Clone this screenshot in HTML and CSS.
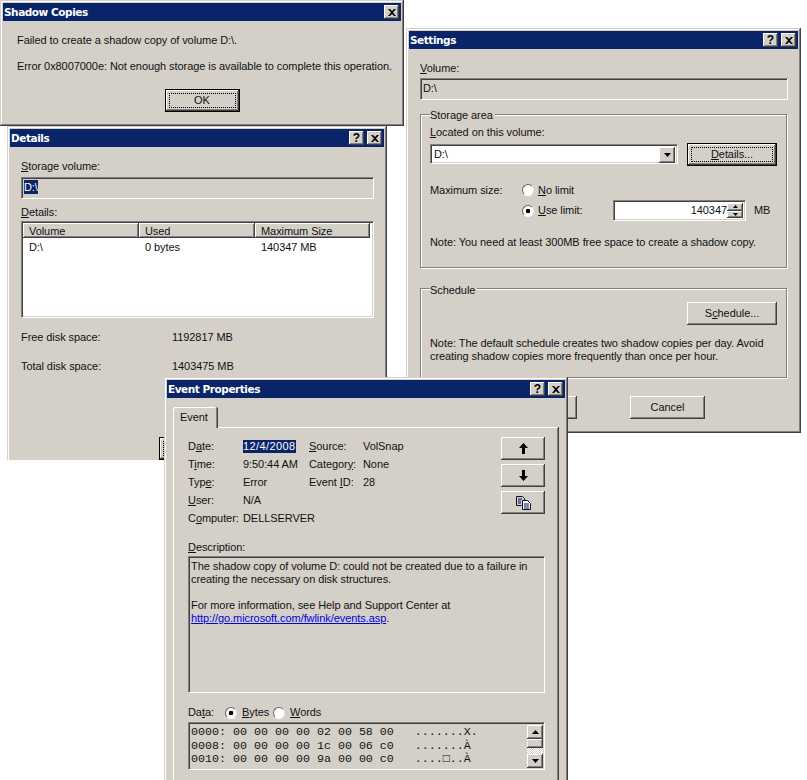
FILE: index.html
```html
<!DOCTYPE html>
<html lang="en">
<head>
<meta charset="utf-8">
<title>Shadow Copies</title>
<link rel="stylesheet" href="styles.css">
</head>
<body>
<main class="desktop">

  <section class="window win-shadow">
    <header class="titlebar">
      <span class="title">Shadow Copies</span>
      <span class="caption-btns">
        <span class="cap raised"><svg width="8" height="7" viewBox="0 0 8 7"><path d="M0 0h2l2 2 2-2h2L5 3.500 8 7H6L4 5 2 7H0l3-3.500z"/></svg></span>
      </span>
    </header>
    <div class="body-msg">
      <p class="msg-first">Failed to create a shadow copy of volume D:\.</p>
      <p class="msg-second">Error 0x8007000e: Not enough storage is available to complete this operation.</p>
      <button class="btn btn-default btn-center"><span class="focus">OK</span></button>
    </div>
  </section>

  <section class="window win-details">
    <header class="titlebar">
      <span class="title">Details</span>
      <span class="caption-btns">
        <span class="cap raised">?</span>
        <span class="cap raised"><svg width="8" height="7" viewBox="0 0 8 7"><path d="M0 0h2l2 2 2-2h2L5 3.500 8 7H6L4 5 2 7H0l3-3.500z"/></svg></span>
      </span>
    </header>
    <div class="body-details">
      <div class="label d-label-1"><u>S</u>torage volume:</div>
      <div class="field sunken d-field"><span class="sel">D:\</span></div>
      <div class="label d-label-2"><u>D</u>etails:</div>
      <div class="list sunken">
        <div class="list-head">
          <span class="raised">Volume</span>
          <span class="raised">Used</span>
          <span class="raised">Maximum Size</span>
        </div>
        <div class="list-row">
          <span>D:\</span>
          <span>0 bytes</span>
          <span>140347 MB</span>
        </div>
      </div>
      <div class="disk-info">
        <span>Free disk space:</span><span>1192817 MB</span>
        <span>Total disk space:</span><span>1403475 MB</span>
      </div>
      <button class="btn btn-default d-ok"><span class="focus">OK</span></button>
    </div>
  </section>

  <section class="window win-settings">
    <header class="titlebar">
      <span class="title">Settings</span>
      <span class="caption-btns">
        <span class="cap raised">?</span>
        <span class="cap raised"><svg width="8" height="7" viewBox="0 0 8 7"><path d="M0 0h2l2 2 2-2h2L5 3.500 8 7H6L4 5 2 7H0l3-3.500z"/></svg></span>
      </span>
    </header>
    <div class="body-settings">
      <div class="label s-label"><u>V</u>olume:</div>
      <div class="field sunken s-field">D:\</div>

      <div class="group group-storage">
        <div class="legend">Storage area</div>
        <div class="label s-located"><u>L</u>ocated on this volume:</div>
        <div class="combo-row">
          <div class="combo sunken">
            <span class="combo-text">D:\</span>
            <span class="combo-arrow raised"><svg width="7" height="4" viewBox="0 0 7 4"><path d="M0 0h7L3.500 4z"/></svg></span>
          </div>
          <button class="btn btn-default btn-wide"><span class="focus"><u>D</u>etails...</span></button>
        </div>
        <div class="size-grid">
          <span>Maximum size:</span>
          <label class="radio-line"><span class="radio"></span><span><u>N</u>o limit</span></label>
          <span></span><span></span>
          <span></span>
          <label class="radio-line"><span class="radio checked"></span><span><u>U</u>se limit:</span></label>
          <div class="spin sunken">
            <span class="spin-value">140347</span>
            <span class="spin-btns">
              <span class="spin-btn raised"><svg width="5" height="3" viewBox="0 0 5 3"><path d="M2.500 0L5 3H0z"/></svg></span>
              <span class="spin-btn raised"><svg width="5" height="3" viewBox="0 0 5 3"><path d="M0 0h5L2.500 3z"/></svg></span>
            </span>
          </div>
          <span class="unit">MB</span>
        </div>
        <p class="note-storage">Note: You need at least 300MB free space to create a shadow copy.</p>
      </div>

      <div class="group group-schedule">
        <div class="legend">Schedule</div>
        <div class="schedule-action">
          <button class="btn btn-wide">S<u>c</u>hedule...</button>
        </div>
        <p class="note-schedule">Note: The default schedule creates two shadow copies per day. Avoid creating shadow copies more frequently than once per hour.</p>
      </div>

      <div class="s-footer">
        <button class="btn">OK</button>
        <button class="btn">Cancel</button>
      </div>
    </div>
  </section>

  <section class="window win-event">
    <header class="titlebar">
      <span class="title">Event Properties</span>
      <span class="caption-btns">
        <span class="cap raised">?</span>
        <span class="cap raised"><svg width="8" height="7" viewBox="0 0 8 7"><path d="M0 0h2l2 2 2-2h2L5 3.500 8 7H6L4 5 2 7H0l3-3.500z"/></svg></span>
      </span>
    </header>
    <div class="body-event">
      <div class="tab">Event</div>
      <div class="tab-panel">
        <div class="event-top">
          <div class="event-grid">
            <span>D<u>a</u>te:</span><span><span class="sel">12/4/2008</span></span><span><u>S</u>ource:</span><span>VolSnap</span>
            <span>T<u>i</u>me:</span><span>9:50:44 AM</span><span>Categor<u>y</u>:</span><span>None</span>
            <span>Typ<u>e</u>:</span><span>Error</span><span>Event <u>I</u>D:</span><span>28</span>
            <span><u>U</u>ser:</span><span class="wide">N/A</span>
            <span>C<u>o</u>mputer:</span><span class="wide">DELLSERVER</span>
          </div>
          <div class="nav-btns">
            <button class="btn nav-btn"><svg width="9" height="11" viewBox="0 0 9 11"><path d="M4.500 0L9 5H6v6H3V5H0z"/></svg></button>
            <button class="btn nav-btn"><svg width="9" height="11" viewBox="0 0 9 11"><path d="M3 0h3v6h3l-4.500 5L0 6h3z"/></svg></button>
            <button class="btn nav-btn"><svg width="15" height="14" viewBox="0 0 15 14"><path d="M.5.500h6l2 2v2M.5.500v9h5M2 3h4M2 5h3M2 7h3" fill="none" stroke="#0b0b3c"/><path d="M6.500 4.500h5l3 3v6h-8z" fill="#fff" stroke="#0b0b3c"/><path d="M8 8h5M8 10h5M8 12h5" fill="none" stroke="#0b0b3c"/></svg></button>
          </div>
        </div>
        <div class="label e-desc-label"><u>D</u>escription:</div>
        <div class="desc sunken">
          <p>The shadow copy of volume D: could not be created due to a failure in creating the necessary on disk structures.</p>
          <p class="desc-more">For more information, see Help and Support Center at <a href="#">http://go.microsoft.com/fwlink/events.asp</a>.</p>
        </div>
        <div class="data-row">
          <span class="data-label">Da<u>t</u>a:</span>
          <label class="radio-line"><span class="radio checked"></span><span><u>B</u>ytes</span></label>
          <label class="radio-line"><span class="radio"></span><span><u>W</u>ords</span></label>
        </div>
        <div class="hex sunken">
          <pre class="hex-text">0000: 00 00 00 00 02 00 58 00   .......X.
0008: 00 00 00 00 1c 00 06 c0   .......À
0010: 00 00 00 00 9a 00 00 c0   ....□..À</pre>
          <div class="scroll">
            <span class="scroll-btn raised"><svg width="7" height="4" viewBox="0 0 7 4"><path d="M3.500 0L7 4H0z"/></svg></span>
            <span class="scroll-thumb raised"></span>
            <span class="scroll-track"></span>
            <span class="scroll-btn raised"><svg width="7" height="4" viewBox="0 0 7 4"><path d="M0 0h7L3.500 4z"/></svg></span>
          </div>
        </div>
      </div>
    </div>
  </section>

</main>
</body>
</html>
```
FILE: styles.css
```css
* { box-sizing: border-box; }
html, body { margin: 0; padding: 0; background: #fff; }
.desktop {
  position: relative;
  width: 807px;
  height: 780px;
  overflow: hidden;
  font-family: "Liberation Sans", Arial, sans-serif;
  font-size: 11px;
  line-height: 13px;
  letter-spacing: -0.070px;
  color: #111;
}
p { margin: 0; }
u { text-underline-offset: 1px; }

.raised {
  background: #d4d0c8;
  box-shadow: inset -1px -1px #404040, inset 1px 1px #fff, inset -2px -2px #808080;
}
.sunken {
  border: 1px solid;
  border-color: #808080 #fff #fff #808080;
  box-shadow: inset 1px 1px #404040, inset -1px -1px #d4d0c8;
}

.window {
  position: absolute;
  background: #d4d0c8;
  padding: 3px;
  overflow: hidden;
  box-shadow: inset -1px -1px #404040, inset 1px 1px #d4d0c8, inset -2px -2px #808080, inset 2px 2px #fff;
}
.win-shadow { left: 0; top: 0; width: 404px; height: 126px; }
.win-details { left: 7px; top: 126px; width: 380px; height: 334px; box-shadow: inset -1px 0 #404040, inset 1px 1px #d4d0c8, inset -2px 0 #808080, inset 2px 2px #fff; }
.win-settings { left: 406px; top: 28px; width: 395px; height: 405px; }
.win-event { left: 164px; top: 377px; width: 404px; height: 430px; }

.titlebar {
  display: flex;
  align-items: center;
  justify-content: space-between;
  height: 18px;
  padding: 0 2px 0 1px;
  background: #0a246a;
  color: #fff;
}
.title {
  font-family: "DejaVu Sans", Verdana, sans-serif;
  font-size: 10.500px;
  font-weight: 700;
  letter-spacing: -0.450px;
  white-space: nowrap;
}
.caption-btns { display: flex; gap: 3px; }
.cap {
  display: flex;
  align-items: center;
  justify-content: center;
  width: 15px;
  height: 14px;
  font: 700 12px/14px "Liberation Sans", Arial, sans-serif;
  color: #000;
}

.btn {
  display: flex;
  align-items: center;
  justify-content: center;
  width: 75px;
  height: 23px;
  padding: 0;
  border: 0;
  background: #d4d0c8;
  color: #111;
  font: inherit;
  letter-spacing: inherit;
  box-shadow: inset -1px -1px #404040, inset 1px 1px #fff, inset -2px -2px #808080;
}
.btn-default {
  border: 1px solid #000;
  padding: 3px;
}
.focus {
  display: flex;
  align-items: center;
  justify-content: center;
  width: 100%;
  height: 100%;
  border: 1px dotted #000;
}
.btn-wide { width: 90px; flex: none; }
.btn-center { margin: 16px auto 0; }

.field {
  height: 22px;
  padding: 2px 1px 0 2px;
  line-height: 14px;
}
.sel { background: #0a246a; color: #fff; display: inline-block; }
.label { height: 13px; }

/* Shadow Copies message */
.body-msg { padding: 13px 14px 0 14px; }
.msg-second { margin-top: 13px; white-space: nowrap; }

/* Details */
.body-details { padding: 13px 10px 0 11px; }
.d-label-2 { margin-top: 7px; }
.d-field { margin-top: 4px; }
.list { margin-top: 2px; height: 97px; padding: 1px; background: #fff; }
.list-head, .list-row { display: grid; grid-template-columns: 116px 116px 115px; }
.list-head span { height: 15px; padding: 2px 0 0 6px; line-height: 13px; }
.list-row { margin-top: 3px; }
.list-row span { padding-left: 6px; }
.disk-info {
  display: grid;
  grid-template-columns: 151px 1fr;
  row-gap: 16px;
  margin-top: 13px;
}
.d-ok { margin: 64px 0 0 138px; }

/* Settings */
.body-settings { padding: 13px 10px 0 11px; }
.s-field { margin-top: 3px; }
.group {
  border: 1px solid #808080;
  box-shadow: 1px 1px #fff, inset 1px 1px #fff;
  padding: 0 9px;
  margin-right: 1px;
}
.legend {
  width: fit-content;
  height: 13px;
  margin-top: -6px;
  padding: 0 2px 0 0;
  background: #d4d0c8;
}
.group-storage { height: 154px; margin-top: 14px; }
.group-schedule { height: 90px; margin-top: 20px; }
.group-schedule .legend { margin-top: -5px; }
.group-schedule .schedule-action { margin-top: 5px; }
.s-located { margin-top: 4px; }
.combo-row { display: flex; justify-content: space-between; align-items: flex-start; margin-top: 4px; }
.combo {
  display: flex;
  justify-content: space-between;
  width: 248px;
  height: 20px;
  margin-top: 1px;
  padding: 2px;
  background: #fff;
}
.combo-text { line-height: 15px; padding-left: 1px; }
.combo-arrow { display: flex; align-items: center; justify-content: center; width: 16px; height: 16px; }
.size-grid {
  display: grid;
  grid-template-columns: 92px 91px 133px 1fr;
  grid-template-rows: 20px 21px;
  align-items: center;
  margin-top: 14px;
}
.radio-line { display: flex; align-items: center; gap: 4px; }
.radio {
  display: block;
  flex: none;
  width: 12px;
  height: 12px;
  border-radius: 50%;
  border: 1px solid;
  border-color: #666 #e8e8e8 #fff #666;
  background: #fff;
}
.radio.checked { background: radial-gradient(circle, #000 2px, #fff 2.600px); }
.spin {
  display: flex;
  justify-content: space-between;
  height: 21px;
  padding: 2px;
  background: #fff;
}
.spin-value { flex: 1; text-align: right; padding-right: 0; line-height: 14px; }
.spin-btns { display: flex; flex-direction: column; width: 16px; }
.spin-btn { display: flex; align-items: center; justify-content: center; height: 8.500px; }
.unit { padding-left: 8px; }
.note-storage { margin-top: 15px; white-space: nowrap; }
.schedule-action { display: flex; justify-content: flex-end; margin-top: 6px; }
.note-schedule { margin-top: 12px; width: 345px; }
.s-footer { display: flex; gap: 53px; margin: 18px 0 0 82px; }

/* Event properties */
.body-event { padding: 9px 6px 0 6px; }
.tab {
  width: 45px;
  height: 21px;
  margin-bottom: -1px;
  padding: 4px 0 0 7px;
  position: relative;
  background: #d4d0c8;
  border-radius: 2px 2px 0 0;
  box-shadow: inset -1px 0 #404040, inset 1px 1px #fff, inset -2px 0 #808080;
}
.tab-panel {
  width: 386px;
  height: 420px;
  padding: 10px 14px 0 15px;
  box-shadow: inset -1px 0 #404040, inset 1px 1px #fff, inset -2px 0 #808080;
}
.event-top { display: flex; justify-content: space-between; align-items: flex-start; }
.event-grid {
  display: grid;
  grid-template-columns: 55px 66px 54px 100px;
  grid-auto-rows: 18px;
  align-items: center;
}
.event-grid .sel { letter-spacing: 0.400px; }
.wide { grid-column: 2 / 5; }
.nav-btns { display: flex; flex-direction: column; gap: 4px; }
.nav-btn { width: 44px; height: 23px; }
.e-desc-label { margin-top: 14px; }
.desc {
  height: 137px;
  margin-top: 2px;
  padding: 3px 4px 0 2px;
}
.desc a { color: #0000e0; text-decoration: underline; }
.desc-more { margin-top: 13px; width: 300px; }
.data-row { display: flex; align-items: center; height: 13px; margin-top: 13px; }
.data-label { width: 37px; }
.data-row .radio-line { width: 48px; gap: 5px; }
.hex {
  display: flex;
  justify-content: space-between;
  height: 48px;
  margin-top: 3px;
  padding: 2px 1px 1px 2px;
}
.hex-text {
  margin: 1px 0 0;
  font-family: "Liberation Mono", "Courier New", monospace;
  font-size: 11.670px;
  line-height: 13.500px;
  letter-spacing: 0;
}
.scroll { display: flex; flex-direction: column; width: 16px; }
.scroll-btn { display: flex; align-items: center; justify-content: center; height: 14px; flex: none; }
.scroll-thumb { height: 9px; flex: none; }
.scroll-track { flex: 1; background: repeating-conic-gradient(#fff 0 25%, #d4d0c8 0 50%) 0 0 / 2px 2px; }
```
